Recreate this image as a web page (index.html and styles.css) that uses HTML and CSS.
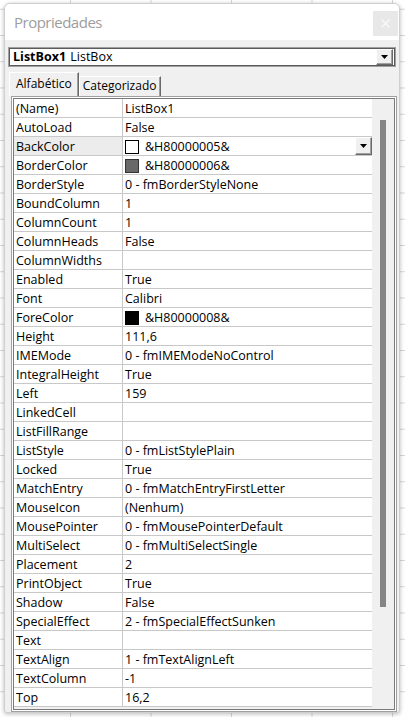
FILE: index.html
```html
<!DOCTYPE html>
<html lang="pt">
<head>
<meta charset="utf-8">
<title>Propriedades</title>
<link rel="stylesheet" href="styles.css">
</head>
<body>
<div class="window">
  <div class="titlebar">
    <span class="title">Propriedades</span>
    <span class="close"><svg width="9" height="9" viewBox="0 0 9 9"><path d="M0.5 0.5L8.5 8.5M8.5 0.5L0.5 8.5" stroke="#fafafa" stroke-width="1.2"/></svg></span>
  </div>
  <div class="body">
    <div class="combo">
      <span class="combo-text"><b>ListBox1</b> ListBox</span>
      <span class="btn"><svg width="7" height="4" viewBox="0 0 7 4"><path d="M0 0H7L3.5 4Z" fill="#000"/></svg></span>
    </div>
    <div class="tabs">
      <div class="tab active">Alfabético</div>
      <div class="tab">Categorizado</div>
    </div>
    <div class="grid">
      <div class="rows">
        <div class="row"><div class="name">(Name)</div><div class="val">ListBox1</div></div>
        <div class="row"><div class="name">AutoLoad</div><div class="val">False</div></div>
        <div class="row selected"><div class="name">BackColor</div><div class="val"><span class="swatch white"></span>&amp;H80000005&amp;<span class="drop"><svg width="7" height="4" viewBox="0 0 7 4"><path d="M0 0H7L3.5 4Z" fill="#000"/></svg></span></div></div>
        <div class="row"><div class="name">BorderColor</div><div class="val"><span class="swatch gray"></span>&amp;H80000006&amp;</div></div>
        <div class="row"><div class="name">BorderStyle</div><div class="val">0 - fmBorderStyleNone</div></div>
        <div class="row"><div class="name">BoundColumn</div><div class="val">1</div></div>
        <div class="row"><div class="name">ColumnCount</div><div class="val">1</div></div>
        <div class="row"><div class="name">ColumnHeads</div><div class="val">False</div></div>
        <div class="row"><div class="name">ColumnWidths</div><div class="val"></div></div>
        <div class="row"><div class="name">Enabled</div><div class="val">True</div></div>
        <div class="row"><div class="name">Font</div><div class="val">Calibri</div></div>
        <div class="row"><div class="name">ForeColor</div><div class="val"><span class="swatch black"></span>&amp;H80000008&amp;</div></div>
        <div class="row"><div class="name">Height</div><div class="val">111,6</div></div>
        <div class="row"><div class="name">IMEMode</div><div class="val">0 - fmIMEModeNoControl</div></div>
        <div class="row"><div class="name">IntegralHeight</div><div class="val">True</div></div>
        <div class="row"><div class="name">Left</div><div class="val">159</div></div>
        <div class="row"><div class="name">LinkedCell</div><div class="val"></div></div>
        <div class="row"><div class="name">ListFillRange</div><div class="val"></div></div>
        <div class="row"><div class="name">ListStyle</div><div class="val">0 - fmListStylePlain</div></div>
        <div class="row"><div class="name">Locked</div><div class="val">True</div></div>
        <div class="row"><div class="name">MatchEntry</div><div class="val">0 - fmMatchEntryFirstLetter</div></div>
        <div class="row"><div class="name">MouseIcon</div><div class="val">(Nenhum)</div></div>
        <div class="row"><div class="name">MousePointer</div><div class="val">0 - fmMousePointerDefault</div></div>
        <div class="row"><div class="name">MultiSelect</div><div class="val">0 - fmMultiSelectSingle</div></div>
        <div class="row"><div class="name">Placement</div><div class="val">2</div></div>
        <div class="row"><div class="name">PrintObject</div><div class="val">True</div></div>
        <div class="row"><div class="name">Shadow</div><div class="val">False</div></div>
        <div class="row"><div class="name">SpecialEffect</div><div class="val">2 - fmSpecialEffectSunken</div></div>
        <div class="row"><div class="name">Text</div><div class="val"></div></div>
        <div class="row"><div class="name">TextAlign</div><div class="val">1 - fmTextAlignLeft</div></div>
        <div class="row"><div class="name">TextColumn</div><div class="val">-1</div></div>
        <div class="row"><div class="name">Top</div><div class="val">16,2</div></div>
      </div>
      <div class="scroll"><div class="thumb"></div></div>
    </div>
  </div>
</div>
</body>
</html>
```

FILE: styles.css
```css
* { box-sizing: border-box; }

html, body {
  margin: 0;
  padding: 0;
}

body {
  width: 405px;
  height: 717px;
  overflow: hidden;
  background-color: #ffffff;
  background-image:
    linear-gradient(to bottom, #d6d6d6 1px, transparent 1px),
    linear-gradient(to right, #d6d6d6 1px, transparent 1px);
  background-size: 100% 26.25px, 80.5px 100%;
  background-position: 0 35px, 70px 0;
  font-family: "Open Sans", "Noto Sans", sans-serif;
  color: #000;
}

.window {
  margin: 3px 0 0 4px;
  width: 396px;
  height: 710px;
  border: 1px solid #cfcfcf;
  border-radius: 6px 6px 3px 3px;
  background: #f0f0f0;
  box-shadow: 0 1px 4px rgba(0, 0, 0, 0.28);
  display: flex;
  flex-direction: column;
  overflow: hidden;
}

.titlebar {
  height: 36px;
  background: #ffffff;
  display: flex;
  justify-content: space-between;
  align-items: flex-start;
  flex-shrink: 0;
}

.title {
  margin: 8px 0 0 9px;
  font-size: 15px;
  letter-spacing: -0.5px;
  line-height: 20px;
  color: #9d9d9d;
}

.close {
  margin: 7px 1px 0 0;
  width: 25px;
  height: 25px;
  background: #e8e8e8;
  display: flex;
  align-items: center;
  justify-content: center;
}

.body {
  flex: 1;
  padding: 7px 3px 0 3px;
  display: flex;
  flex-direction: column;
  min-height: 0;
}

.combo {
  height: 20px;
  border: 1px solid #a0a0a0;
  box-shadow: inset 0 0 0 1px #5a5a5a;
  background: #fff;
  display: flex;
  align-items: center;
  justify-content: space-between;
  padding: 0 2px 0 4px;
  flex-shrink: 0;
}

.combo-text {
  font-size: 12.5px;
  line-height: 16px;
  white-space: nowrap;
}

.combo-text b {
  font-weight: 700;
  margin-right: 1px;
}

.btn, .drop {
  width: 17px;
  height: 16px;
  background: #f0f0f0;
  border-top: 1px solid #ffffff;
  border-left: 1px solid #ffffff;
  border-right: 1px solid #696969;
  border-bottom: 1px solid #696969;
  box-shadow: inset -1px -1px 0 #a0a0a0;
  display: flex;
  align-items: center;
  justify-content: center;
}

.tabs {
  margin-top: 5px;
  height: 24px;
  display: flex;
  align-items: flex-end;
  padding-left: 1px;
  flex-shrink: 0;
}

.tab {
  font-size: 12px;
  line-height: 16px;
  height: 20px;
  padding: 1px 4px 0 3px;
  border-left: 1px solid #ffffff;
  border-top: 1px solid #ffffff;
  border-right: 1px solid #696969;
  box-shadow: inset -1px 0 0 #a0a0a0;
  background: #f0f0f0;
}

.tab.active {
  height: 24px;
  padding: 3px 6px 0 6px;
}

.grid {
  flex: 1;
  margin: 0 0 0 3px;
  width: 386px;
  border: 1px solid #a0a0a0;
  box-shadow: inset 0 0 0 1px #ffffff, inset 0 0 0 2px #7a7a7a;
  padding: 2px;
  display: flex;
  background: #f0f0f0;
  min-height: 0;
}

.rows {
  width: 358px;
  background: #fff;
  align-self: flex-start;
}

.row {
  display: flex;
  height: 19px;
  border-bottom: 1px solid #c8c8c8;
  font-size: 12.5px;
  line-height: 17px;
  white-space: nowrap;
}

.name {
  width: 109px;
  padding: 1px 0 0 2px;
  border-right: 1px solid #c8c8c8;
  flex-shrink: 0;
}

.val {
  flex: 1;
  padding: 1px 0 0 2px;
  display: flex;
  align-items: center;
}

.selected .name {
  background: #ececec;
}

.swatch {
  width: 14px;
  height: 14px;
  border: 1px solid #000;
  margin-right: 6px;
  flex-shrink: 0;
}

.swatch.white { background: #ffffff; }
.swatch.gray { background: #696969; border-color: #333; }
.swatch.black { background: #000000; }

.drop {
  margin: -1px 0 0 auto;
  height: 18px;
}

.scroll {
  flex: 1;
  background: #f0f0f0;
  padding: 21px 0 0 8px;
}

.thumb {
  width: 6px;
  height: 487px;
  background: #858585;
}
```
